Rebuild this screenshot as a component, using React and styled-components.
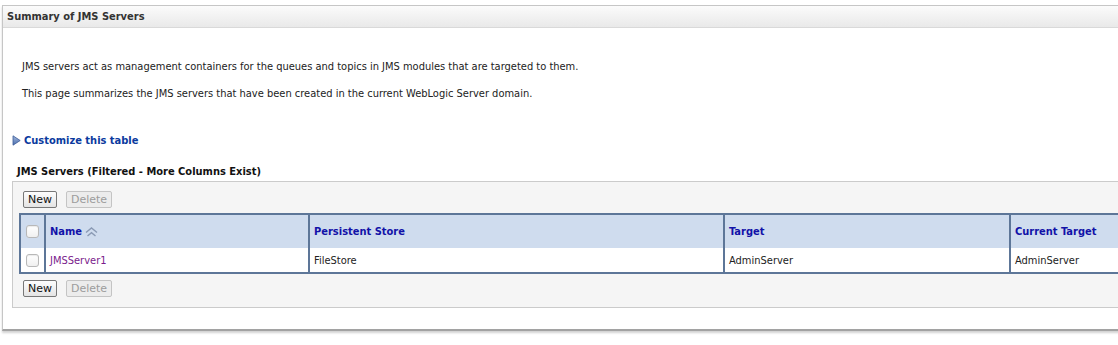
import React from 'react'
import styled, { createGlobalStyle } from 'styled-components'

const Global = createGlobalStyle`
  html, body {
    margin: 0;
    padding: 0;
    background: #fff;
    overflow: hidden;
  }
  body {
    font-family: Tahoma, "DejaVu Sans Condensed", "DejaVu Sans", sans-serif;
    font-size: 11px;
    color: #222;
  }
`

const Page = styled.div`
  width: 1118px;
  height: 345px;
  overflow: hidden;
  padding-top: 5px;
  box-sizing: border-box;
`

const Panel = styled.section`
  margin-left: 2px;
  width: 1140px;
  border: 1px solid #c6c6c6;
  border-bottom: 2px solid #a2a2a2;
  box-shadow: 0 2px 2px rgba(0, 0, 0, 0.18);
  background: #fff;
  padding-bottom: 21px;
`

const PanelHeader = styled.h2`
  margin: 0;
  height: 21px;
  line-height: 21px;
  padding-left: 4px;
  font-size: 11px;
  font-weight: bold;
  color: #333;
  background: linear-gradient(#fbfbfb, #e9e9e9);
  border-bottom: 1px solid #d9d9d9;
`

const Intro = styled.div`
  padding: 32px 0 0 19px;
`

const Para = styled.p`
  margin: 0 0 14px;
  line-height: 13px;
`

const Customize = styled.a`
  display: flex;
  align-items: center;
  gap: 3px;
  margin: 34px 0 0 9px;
  font-weight: bold;
  color: #0b3a9e;
  text-decoration: none;
  cursor: pointer;
`

const TableTitle = styled.h3`
  margin: 18px 0 0 14px;
  font-size: 11px;
  font-weight: bold;
  color: #111;
  line-height: 14px;
`

const TableBox = styled.div`
  margin: 2px 0 0 9px;
  background: #f5f5f5;
  border: 1px solid #cbcbcb;
  padding: 9px 0 10px 6px;
`

const ButtonBar = styled.div`
  display: flex;
  gap: 9px;
  padding-left: 4px;
`

const Button = styled.button`
  font-family: "DejaVu Sans", sans-serif;
  font-size: 11px;
  height: 17px;
  padding: 0 4px;
  border-radius: 2px;
  border: 1px solid ${p => (p.disabled ? '#c4c4c4' : '#777')};
  color: ${p => (p.disabled ? '#9c9c9c' : '#111')};
  background: ${p =>
    p.disabled ? '#ececec' : 'linear-gradient(#fdfdfd, #e4e4e4)'};
  line-height: 15px;
`

const Table = styled.table`
  border-collapse: collapse;
  table-layout: fixed;
  width: 1140px;
  margin: 5px 0 6px;
  background: #fff;
  border: 2px solid #5d7698;
`

const Th = styled.th`
  background: #cfdcee;
  height: 33px;
  text-align: left;
  padding: 0 4px;
  font-weight: bold;
  color: #1212a8;
  border-left: 2px solid #5d7698;
  border-right: 1px solid #fff;
  &:first-child {
    border-left: none;
  }
`

const Td = styled.td`
  height: 24px;
  padding: 0 4px;
  border-left: 2px solid #5d7698;
  &:first-child {
    border-left: none;
  }
`

const CheckCell = styled.div`
  display: flex;
  justify-content: center;
`

const Check = styled.span`
  display: block;
  width: 11px;
  height: 11px;
  border: 1px solid #b8b8b8;
  border-radius: 3px;
  background: linear-gradient(#fff, #f0f0f0);
  box-shadow: inset 0 1px 1px rgba(0, 0, 0, 0.08);
`

const NameLink = styled.a`
  color: #7a1b8c;
  text-decoration: none;
`

const HeadLabel = styled.span`
  display: inline-flex;
  align-items: center;
  gap: 3px;
`

function ExpandIcon() {
  return (
    <svg width="9" height="11" viewBox="0 0 9 11">
      <defs>
        <linearGradient id="eg" x1="0" y1="0" x2="0" y2="1">
          <stop offset="0" stopColor="#9fb6dc" />
          <stop offset="1" stopColor="#4d6fae" />
        </linearGradient>
      </defs>
      <path d="M1 0.8 L8.2 5.5 L1 10.2 Z" fill="url(#eg)" stroke="#3b5a97" strokeWidth="0.8" />
    </svg>
  )
}

function SortIcon() {
  return (
    <svg width="13" height="10" viewBox="0 0 13 10">
      <path d="M1 5.5 L6.5 1 L12 5.5" fill="none" stroke="#8a9ab4" strokeWidth="1.4" />
      <path d="M2.5 9 L6.5 5.6 L10.5 9" fill="none" stroke="#8a9ab4" strokeWidth="1.4" />
    </svg>
  )
}

const columns = [
  { key: 'name', label: 'Name', width: 264, sorted: true },
  { key: 'store', label: 'Persistent Store', width: 415 },
  { key: 'target', label: 'Target', width: 286 },
  { key: 'current', label: 'Current Target' }
]

const rows = [
  { name: 'JMSServer1', store: 'FileStore', target: 'AdminServer', current: 'AdminServer' }
]

function Buttons() {
  return (
    <ButtonBar>
      <Button>New</Button>
      <Button disabled>Delete</Button>
    </ButtonBar>
  )
}

export default function App() {
  return (
    <Page>
      <Global />
      <Panel>
        <PanelHeader>Summary of JMS Servers</PanelHeader>
        <Intro>
          <Para>
            JMS servers act as management containers for the queues and topics in JMS modules
            that are targeted to them.
          </Para>
          <Para>
            This page summarizes the JMS servers that have been created in the current WebLogic
            Server domain.
          </Para>
        </Intro>
        <Customize>
          <ExpandIcon />
          Customize this table
        </Customize>
        <TableTitle>JMS Servers (Filtered - More Columns Exist)</TableTitle>
        <TableBox>
          <Buttons />
          <Table>
            <colgroup>
              <col style={{ width: 25 }} />
              {columns.map(c => (
                <col key={c.key} style={c.width ? { width: c.width } : undefined} />
              ))}
            </colgroup>
            <thead>
              <tr>
                <Th>
                  <CheckCell>
                    <Check />
                  </CheckCell>
                </Th>
                {columns.map(c => (
                  <Th key={c.key}>
                    <HeadLabel>
                      {c.label}
                      {c.sorted && <SortIcon />}
                    </HeadLabel>
                  </Th>
                ))}
              </tr>
            </thead>
            <tbody>
              {rows.map(r => (
                <tr key={r.name}>
                  <Td>
                    <CheckCell>
                      <Check />
                    </CheckCell>
                  </Td>
                  <Td>
                    <NameLink href="#">{r.name}</NameLink>
                  </Td>
                  <Td>{r.store}</Td>
                  <Td>{r.target}</Td>
                  <Td>{r.current}</Td>
                </tr>
              ))}
            </tbody>
          </Table>
          <Buttons />
        </TableBox>
      </Panel>
    </Page>
  )
}
